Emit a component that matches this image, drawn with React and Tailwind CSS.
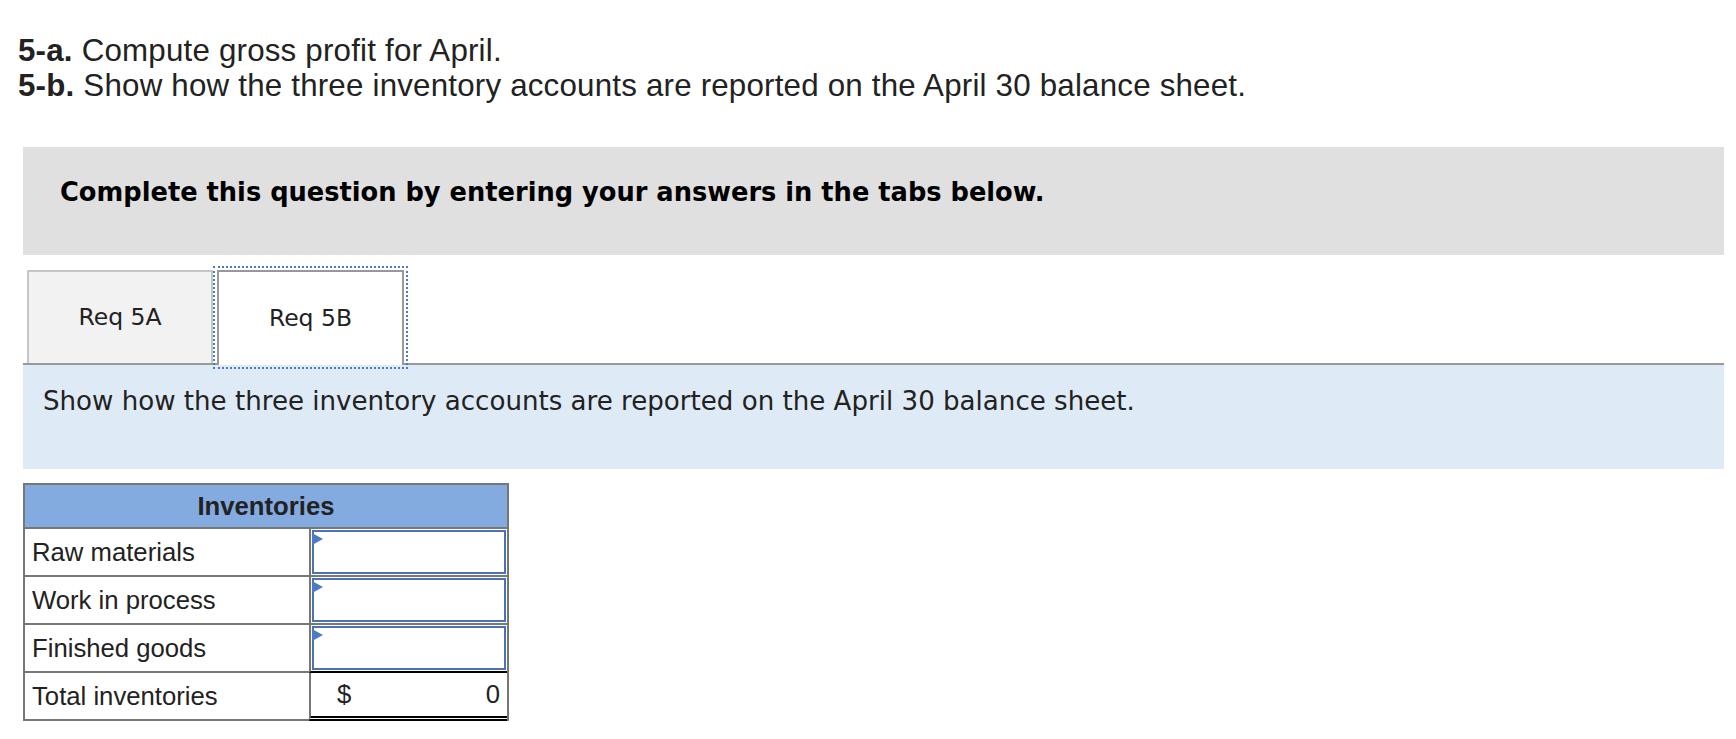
import React from "react";

const rows = ["Raw materials", "Work in process", "Finished goods"];

function InputCell({ last }) {
  return (
    <div
      className={`relative border-b-2 border-l-2 border-l-[#777] p-[1px] ${
        last ? "border-b-black" : "border-b-[#777]"
      }`}
    >
      <div className="h-full border-2 border-[#4a72b5] bg-white" />
      <span className="absolute left-[1px] top-[4px] h-0 w-0 border-y-[6px] border-l-[11px] border-y-transparent border-l-[#4a7bc4]" />
    </div>
  );
}

export default function App() {
  return (
    <div className="min-h-screen bg-white pr-[12px] text-black">
      <div
        className="pl-[18px] pt-[33px] text-[31.3px] leading-[35px] tracking-[0.2px] text-[#222]"
        style={{ fontFamily: "'Liberation Sans', Arial, sans-serif" }}
      >
        <p>
          <b>5-a.</b> Compute gross profit for April.
        </p>
        <p>
          <b>5-b.</b> Show how the three inventory accounts are reported on the April 30 balance sheet.
        </p>
      </div>

      <div className="ml-[23px] mt-[44px]">
        <div className="flex h-[108px] items-center bg-[#e0e0e0] pb-[17px] pl-[37px]">
          <p className="text-[25.7px] font-bold" style={{ fontFamily: "'DejaVu Sans', Verdana, sans-serif" }}>
            Complete this question by entering your answers in the tabs below.
          </p>
        </div>

        <div
          className="mt-[15px] flex items-end border-b-2 border-[#999]"
          style={{ fontFamily: "'DejaVu Sans', Verdana, sans-serif" }}
        >
          <div className="ml-[4px] flex h-[93px] w-[186px] items-center justify-center border-2 border-b-0 border-[#c6c6c6] bg-[#f2f2f2] text-[23.5px] text-[#222]">
            Req 5A
          </div>
          <div className="-mb-[2px] ml-[4px] flex h-[95px] w-[187px] items-center justify-center border-2 border-b-0 border-[#999] bg-white text-[23.5px] text-[#222] outline-2 outline-offset-2 outline-[#4a7bc4] outline-dotted">
            Req 5B
          </div>
        </div>

        <div className="h-[104px] bg-[#deebf7] pl-[20px] pt-[17px]">
          <p className="text-[26.1px] leading-[39px] text-[#222]" style={{ fontFamily: "'DejaVu Sans', Verdana, sans-serif" }}>
            Show how the three inventory accounts are reported on the April 30 balance sheet.
          </p>
        </div>

        <div
          className="mt-[14px] w-[486px] border-x-2 border-t-2 border-[#777] text-[25.7px] text-[#222]"
          style={{ fontFamily: "'Liberation Sans', Arial, sans-serif" }}
        >
          <div className="flex h-[44px] items-center justify-center border-b-2 border-[#777] bg-[#83abe0] font-bold">
            Inventories
          </div>
          {rows.map((r, i) => (
            <div key={r} className="grid h-[48px] grid-cols-[284px_1fr]">
              <div className="flex items-center border-b-2 border-[#777] pl-[7px]">{r}</div>
              <InputCell last={i === rows.length - 1} />
            </div>
          ))}
          <div className="grid h-[48px] grid-cols-[284px_1fr]">
            <div className="flex items-center border-b-2 border-[#777] pl-[7px]">Total inventories</div>
            <div className="flex items-center justify-between border-b-[5px] border-l-2 border-b-black border-l-[#777] border-double pl-[26px] pr-[7px]">
              <span>$</span>
              <span>0</span>
            </div>
          </div>
        </div>
      </div>
    </div>
  );
}
